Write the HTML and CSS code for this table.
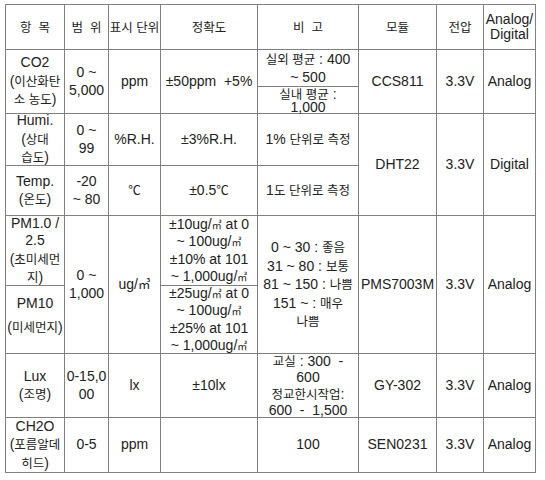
FILE: index.html
```html
<!DOCTYPE html>
<html lang="ko">
<head>
<meta charset="utf-8">
<title>센서 사양표</title>
<link rel="stylesheet" href="styles.css">
</head>
<body>
<div class="tbl">
  <!-- header -->
  <div class="c"><span class="t"><span class="k">항&nbsp; 목</span></span></div>
  <div class="c"><span class="t"><span class="k">범&nbsp; 위</span></span></div>
  <div class="c"><span class="t"><span class="k">표시 단위</span></span></div>
  <div class="c"><span class="t"><span class="k">정확도</span></span></div>
  <div class="c"><span class="t"><span class="k">비&nbsp; 고</span></span></div>
  <div class="c"><span class="t"><span class="k">모듈</span></span></div>
  <div class="c"><span class="t"><span class="k">전압</span></span></div>
  <div class="c hd2"><span class="t">Analog/<br>Digital</span></div>

  <!-- CO2 -->
  <div class="c rs2"><span class="t">CO2<br>(<span class="k">이산화탄</span><br><span class="k">소 농도</span>)</span></div>
  <div class="c rs2"><span class="t">0 ~<br>5,000</span></div>
  <div class="c rs2"><span class="t">ppm</span></div>
  <div class="c rs2"><span class="t">±50ppm &nbsp;+5%</span></div>
  <div class="c"><span class="t"><span class="k">실외 평균</span> : 400<br>~ 500</span></div>
  <div class="c rs2"><span class="t">CCS811</span></div>
  <div class="c rs2"><span class="t">3.3V</span></div>
  <div class="c rs2"><span class="t">Analog</span></div>
  <div class="c tight"><span class="t"><span class="k">실내 평균</span> :<br>1,000</span></div>

  <!-- Humi -->
  <div class="c"><span class="t">Humi.<br>(<span class="k">상대</span><br><span class="k">습도</span>)</span></div>
  <div class="c"><span class="t">0 ~<br>99</span></div>
  <div class="c"><span class="t">%R.H.</span></div>
  <div class="c"><span class="t">±3%R.H.</span></div>
  <div class="c"><span class="t">1% <span class="k">단위로 측정</span></span></div>
  <div class="c rs2"><span class="t">DHT22</span></div>
  <div class="c rs2"><span class="t">3.3V</span></div>
  <div class="c rs2"><span class="t">Digital</span></div>

  <!-- Temp -->
  <div class="c"><span class="t">Temp.<br>(<span class="k">온도</span>)</span></div>
  <div class="c"><span class="t">-20<br>~ 80</span></div>
  <div class="c"><span class="t"><span class="k">℃</span></span></div>
  <div class="c"><span class="t">±0.5<span class="k">℃</span></span></div>
  <div class="c"><span class="t">1<span class="k">도 단위로 측정</span></span></div>

  <!-- PM1.0 / 2.5 -->
  <div class="c"><span class="t">PM1.0 /<br>2.5<br>(<span class="k">초미세먼</span><br><span class="k">지</span>)</span></div>
  <div class="c rs2"><span class="t">0 ~<br>1,000</span></div>
  <div class="c rs2"><span class="t">ug/<span class="k">㎥</span></span></div>
  <div class="c"><span class="t">±10ug/<span class="k sm">㎥</span> at 0<br>~ 100ug/<span class="k sm">㎥</span><br>±10% at 101<br>~ 1,000ug/<span class="k sm">㎥</span></span></div>
  <div class="c rs2"><span class="t">0 ~ 30 : <span class="k">좋음</span><br>31 ~ 80 : <span class="k">보통</span><br>81 ~ 150 : <span class="k">나쁨</span><br>151 ~ : <span class="k">매우</span><br><span class="k">나쁨</span></span></div>
  <div class="c rs2"><span class="t">PMS7003M</span></div>
  <div class="c rs2"><span class="t">3.3V</span></div>
  <div class="c rs2"><span class="t">Analog</span></div>

  <!-- PM10 -->
  <div class="c"><span class="t up2">PM10<span class="sub">(<span class="k">미세먼지</span>)</span></span></div>
  <div class="c"><span class="t">±25ug/<span class="k sm">㎥</span> at 0<br>~ 100ug/<span class="k sm">㎥</span><br>±25% at 101<br>~ 1,000ug/<span class="k sm">㎥</span></span></div>

  <!-- Lux -->
  <div class="c"><span class="t">Lux<br>(<span class="k">조명</span>)</span></div>
  <div class="c"><span class="t">0-15,0<br>00</span></div>
  <div class="c"><span class="t">lx</span></div>
  <div class="c"><span class="t">±10lx</span></div>
  <div class="c tight2"><span class="t"><span class="k">교실</span> : 300 &nbsp;-<br>600<br><span class="k">정교한시작업</span>:<br>600 &nbsp;- &nbsp;1,500</span></div>
  <div class="c"><span class="t">GY-302</span></div>
  <div class="c"><span class="t">3.3V</span></div>
  <div class="c"><span class="t">Analog</span></div>

  <!-- CH2O -->
  <div class="c"><span class="t">CH2O<br>(<span class="k">포름알데</span><br><span class="k">히드</span>)</span></div>
  <div class="c"><span class="t">0-5</span></div>
  <div class="c"><span class="t">ppm</span></div>
  <div class="c"><span class="t"></span></div>
  <div class="c"><span class="t">100</span></div>
  <div class="c"><span class="t">SEN0231</span></div>
  <div class="c"><span class="t">3.3V</span></div>
  <div class="c"><span class="t">Analog</span></div>
</div>
</body>
</html>
```

FILE: styles.css
```css
html, body {
  margin: 0;
  padding: 0;
  background: #ffffff;
}

body {
  font-family: "Liberation Sans", "Noto Sans CJK KR", sans-serif;
  font-size: 14px;
  color: #222222;
}

.tbl {
  display: grid;
  grid-template-columns: 58px 43px 51px 96px 100px 77px 46px 51px;
  grid-template-rows: 44px 36px 26px 51px 49px 69px 67px 63px 54px;
  gap: 1px;
  width: max-content;
  margin: 4px 0 0 5px;
  background: #808080;
  border: 1px solid #808080;
}

.c {
  background: #ffffff;
  display: flex;
  align-items: center;
  justify-content: center;
  text-align: center;
  white-space: nowrap;
  line-height: 17.5px;
  min-width: 0;
  min-height: 0;
}

.rs2 {
  grid-row: span 2;
}

.t {
  display: block;
}

.k {
  font-family: "Noto Sans CJK KR", sans-serif;
  font-size: 12.5px;
}

.sm {
  font-size: 10px;
}

.hd2 {
  line-height: 15px;
}

.tight {
  line-height: 13px;
}

.tight2 {
  line-height: 16.5px;
}

.sub {
  display: block;
  margin-top: 6px;
}

.up2 {
  margin-bottom: 8px;
}
```
